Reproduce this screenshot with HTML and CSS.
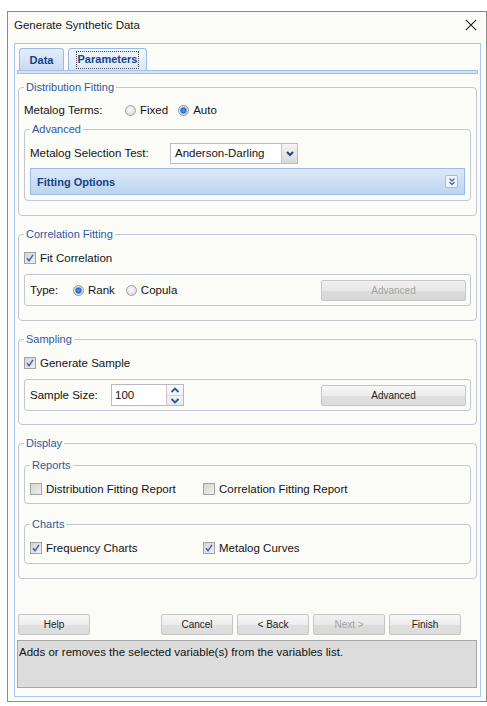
FILE: index.html
```html
<!DOCTYPE html>
<html>
<head>
<meta charset="utf-8">
<title>Generate Synthetic Data</title>
<link rel="stylesheet" href="styles.css">
</head>
<body>
<div class="window">
  <div class="titlebar">
    <span class="title">Generate Synthetic Data</span>
    <svg class="close" width="12" height="12" viewBox="0 0 12 12"><path d="M0.8 0.8L11.2 11.2M11.2 0.8L0.8 11.2" stroke="#1e1e1e" stroke-width="1.1" fill="none"/></svg>
  </div>
  <div class="panel">
    <div class="tabs">
      <div class="tab tab-data">Data</div>
      <div class="tab tab-params active"><span class="focus">Parameters</span></div>
    </div>
    <div class="tabband"></div>
    <div class="content">
      <fieldset class="group g-dist">
        <legend>Distribution Fitting</legend>
        <div class="row">
          <span class="label w-terms">Metalog Terms:</span>
          <span class="opt"><span class="radio"></span>Fixed</span>
          <span class="opt"><span class="radio on"></span>Auto</span>
        </div>
        <fieldset class="group sub g-adv">
          <legend>Advanced</legend>
          <div class="row row-sel">
            <span class="label w-sel">Metalog Selection Test:</span>
            <div class="select">
              <span class="sel-val">Anderson-Darling</span>
              <span class="sel-btn"><svg width="16" height="19" viewBox="0 0 16 19"><path d="M5 8l3 3 3-3" stroke="#23457d" stroke-width="2" fill="none"/></svg></span>
            </div>
          </div>
          <div class="fitbar">
            <span>Fitting Options</span>
            <span class="fiticon"><svg width="10" height="10" viewBox="0 0 10 10"><path d="M2.5 1.5l2.5 2.5 2.5-2.5M2.5 5l2.5 2.5 2.5-2.5" stroke="#3d6fb8" stroke-width="1.3" fill="none"/></svg></span>
          </div>
        </fieldset>
      </fieldset>

      <fieldset class="group g-mid g-corr">
        <legend>Correlation Fitting</legend>
        <div class="row">
          <span class="opt"><span class="cb"><svg width="10" height="10" viewBox="0 0 10 10"><path d="M2 5.2l2 2.6 4-6" stroke="#3a62c4" stroke-width="1.5" fill="none"/></svg></span>Fit Correlation</span>
        </div>
        <div class="inbox">
          <span class="label w-type">Type:</span>
          <span class="opt"><span class="radio on"></span>Rank</span>
          <span class="opt"><span class="radio"></span>Copula</span>
          <button class="btn btn-adv" disabled>Advanced</button>
        </div>
      </fieldset>

      <fieldset class="group g-mid g-samp">
        <legend>Sampling</legend>
        <div class="row">
          <span class="opt"><span class="cb"><svg width="10" height="10" viewBox="0 0 10 10"><path d="M2 5.2l2 2.6 4-6" stroke="#3a62c4" stroke-width="1.5" fill="none"/></svg></span>Generate Sample</span>
        </div>
        <div class="inbox">
          <span class="label w-size">Sample Size:</span>
          <div class="spin">
            <span class="spin-val">100</span>
            <span class="spin-btns">
              <span class="spin-up"><svg width="16" height="10" viewBox="0 0 16 10"><path d="M4.5 7l3.5-3.5 3.5 3.5" stroke="#2a5699" stroke-width="1.8" fill="none"/></svg></span>
              <span class="spin-dn"><svg width="16" height="10" viewBox="0 0 16 10"><path d="M4.5 3l3.5 3.5 3.5-3.5" stroke="#2a5699" stroke-width="1.8" fill="none"/></svg></span>
            </span>
          </div>
          <button class="btn btn-adv">Advanced</button>
        </div>
      </fieldset>

      <fieldset class="group g-display">
        <legend>Display</legend>
        <fieldset class="group sub g-reports">
          <legend>Reports</legend>
          <div class="checks">
            <span class="opt"><span class="cb"></span>Distribution Fitting Report</span>
            <span class="opt"><span class="cb"></span>Correlation Fitting Report</span>
          </div>
        </fieldset>
        <fieldset class="group sub g-charts">
          <legend>Charts</legend>
          <div class="checks">
            <span class="opt"><span class="cb"><svg width="10" height="10" viewBox="0 0 10 10"><path d="M2 5.2l2 2.6 4-6" stroke="#3a62c4" stroke-width="1.5" fill="none"/></svg></span>Frequency Charts</span>
            <span class="opt"><span class="cb"><svg width="10" height="10" viewBox="0 0 10 10"><path d="M2 5.2l2 2.6 4-6" stroke="#3a62c4" stroke-width="1.5" fill="none"/></svg></span>Metalog Curves</span>
          </div>
        </fieldset>
      </fieldset>
    </div>

    <div class="buttons">
      <button class="btn">Help</button>
      <button class="btn btn-cancel">Cancel</button>
      <button class="btn">&lt; Back</button>
      <button class="btn" disabled>Next &gt;</button>
      <button class="btn">Finish</button>
    </div>
    <div class="status">Adds or removes the selected variable(s) from the variables list.</div>
  </div>
</div>
</body>
</html>
```

FILE: styles.css
```css
* { box-sizing: border-box; }

body {
  margin: 0;
  background: #ffffff;
  font-family: "Liberation Sans", Arial, sans-serif;
  font-size: 11.5px;
  color: #141414;
}

.window {
  margin: 11px 0 0 7px;
  width: 480px;
  height: 691px;
  border: 1px solid #8a8a8a;
  background: #fbfbf8;
  display: flex;
  flex-direction: column;
}

.titlebar {
  flex: 0 0 26px;
  height: 26px;
  display: flex;
  align-items: center;
  justify-content: space-between;
  padding: 0 9px 0 6px;
}
.title { font-size: 11.5px; color: #1a1a1a; }
.close { display: block; }

.panel {
  flex: 1 1 auto;
  min-height: 0;
  margin: 5px 5px 4px 6px;
  border: 1px solid #a9c7ec;
  display: flex;
  flex-direction: column;
}

.tabs {
  flex: none;
  display: flex;
  padding: 4px 0 0 4px;
}
.tab {
  height: 22px;
  border: 1px solid #99bbe8;
  border-bottom: none;
  border-radius: 4px 4px 0 0;
  font-weight: bold;
  font-size: 11px;
  color: #15428b;
  display: flex;
  align-items: center;
  justify-content: center;
  background: linear-gradient(#e3edf9, #c9dbf2);
}
.tab-data { width: 45px; margin-right: 4px; }
.tab-params { width: 79px; background: linear-gradient(#f2f7fd, #dbe8f8); }
.focus {
  border: 1px dotted #4a4a4a;
  padding: 1px 1px 2px;
  line-height: 13px;
}

.tabband {
  flex: none;
  height: 4px;
  margin: 0 2px;
  border: 1px solid #a3c1e8;
  background: #d3e3f7;
}

.content { flex: none; padding: 6px 3px 0; }

fieldset.group {
  margin: 0 0 11px;
  padding: 6px 5px 15px;
  border: 1px solid #c3c7d3;
  border-radius: 4px;
  min-width: 0;
}
fieldset.group legend {
  font-size: 11px;
  line-height: 14px;
  padding: 0 2px;
  color: #2f5a9e;
}
fieldset.g-dist { padding-top: 6px; padding-bottom: 14px; }
fieldset.g-adv { margin: 2px 0 0; padding: 7px 5px 5px; }
fieldset.g-corr { padding-top: 7px; padding-bottom: 14px; }
fieldset.g-samp { padding-top: 7px; padding-bottom: 13px; }
fieldset.g-display { padding: 8px 5px 14px; margin-bottom: 0; }
fieldset.g-reports { margin: 0; padding: 7px 5px 4px; }
fieldset.g-charts { margin: 13px 0 0; padding: 7px 5px 5px; }

.row {
  display: flex;
  align-items: center;
  height: 20px;
}

.label { display: inline-block; }
.w-terms { width: 101px; }
.w-sel { width: 140px; }
.w-type { width: 43px; }
.w-size { width: 81px; }

.opt {
  display: inline-flex;
  align-items: center;
  gap: 4px;
  white-space: nowrap;
}
.opt + .opt { margin-left: 10px; }

.radio {
  width: 11px;
  height: 11px;
  border-radius: 50%;
  border: 1px solid #a2a2a2;
  background: radial-gradient(circle at 45% 40%, #fdfdfd 0, #e2e2e2 60%, #cfcfcf 100%);
}
.radio.on {
  border-color: #8a94a6;
  background: radial-gradient(circle at 50% 50%, #5aa9f5 0, #1f62c2 2.6px, #9fb2cf 3.2px, #e4e6ea 4px, #d0d0d0 100%);
}

.cb {
  width: 12px;
  height: 12px;
  border: 1px solid #a3a3a3;
  background: linear-gradient(135deg, #d4d4d4, #f0f0f0);
  display: inline-flex;
  align-items: center;
  justify-content: center;
}
.cb svg { display: block; }

.select {
  width: 128px;
  height: 21px;
  border: 1px solid #b9bcc8;
  background: #fff;
  display: flex;
}
.sel-val { flex: 1; padding: 2px 0 0 4px; line-height: 15px; }
.sel-btn {
  width: 16px;
  border-left: 1px solid #c6c6c6;
  background: linear-gradient(#f4f4f4, #d9d9d9);
}
.sel-btn svg { display: block; }

.fitbar {
  margin-top: 5px;
  height: 27px;
  border: 1px solid #99bbe8;
  background: linear-gradient(#dce8f7 0%, #cfe0f5 45%, #bcd4f0 100%);
  display: flex;
  align-items: center;
  justify-content: space-between;
  padding: 0 6px;
  font-weight: bold;
  font-size: 11px;
  color: #15428b;
}
.fiticon {
  width: 13px;
  height: 13px;
  border: 1px solid #9fbde6;
  border-radius: 2px;
  background: #f1f6fd;
  display: flex;
  align-items: center;
  justify-content: center;
}
.fiticon svg { display: block; }

.inbox {
  margin-top: 6px;
  height: 32px;
  border: 1px solid #c3c7d3;
  border-radius: 3px;
  padding: 0 4px 0 5px;
  display: flex;
  align-items: center;
}
.inbox .opt + .opt { margin-left: 11px; }

.btn {
  height: 21px;
  width: 72px;
  border: 1px solid #c6c6c6;
  border-radius: 2px;
  background: linear-gradient(#f7f7f7 0%, #ededed 50%, #e0e0e0 51%, #dcdcdc 100%);
  font-family: "Liberation Sans", Arial, sans-serif;
  font-size: 10px;
  color: #222;
  padding: 0;
}
.btn:disabled {
  color: #a3a3a3;
  background: linear-gradient(#f0f0f0 0%, #e8e8e8 50%, #dcdcdc 51%, #d8d8d8 100%);
}
.btn-adv { width: 145px; margin-left: auto; }

.spin {
  width: 73px;
  height: 22px;
  border: 1px solid #b7bac6;
  background: #fff;
  display: flex;
}
.spin-val { flex: 1; padding: 3px 0 0 3px; line-height: 15px; }
.spin-btns {
  width: 17px;
  border-left: 1px solid #c8c8c8;
  display: flex;
  flex-direction: column;
  background: linear-gradient(#fafafa, #eaeaea);
}
.spin-up, .spin-dn { flex: 1; display: flex; align-items: center; justify-content: center; }
.spin-up { border-bottom: 1px solid #d4d4d4; }

.checks {
  display: grid;
  grid-template-columns: 173px auto;
  align-items: center;
  height: 20px;
}
.checks .opt + .opt { margin-left: 0; }

.buttons {
  flex: none;
  margin-top: auto;
  display: flex;
  gap: 4px;
  padding-left: 3px;
}
.btn-cancel { margin-left: 67px; }

.status {
  flex: none;
  margin: 5px 3px 8px 2px;
  height: 48px;
  border: 1px solid #a6a6a6;
  background: #dcdcdc;
  padding: 4px 1px;
  line-height: 14px;
  color: #111;
}
```
